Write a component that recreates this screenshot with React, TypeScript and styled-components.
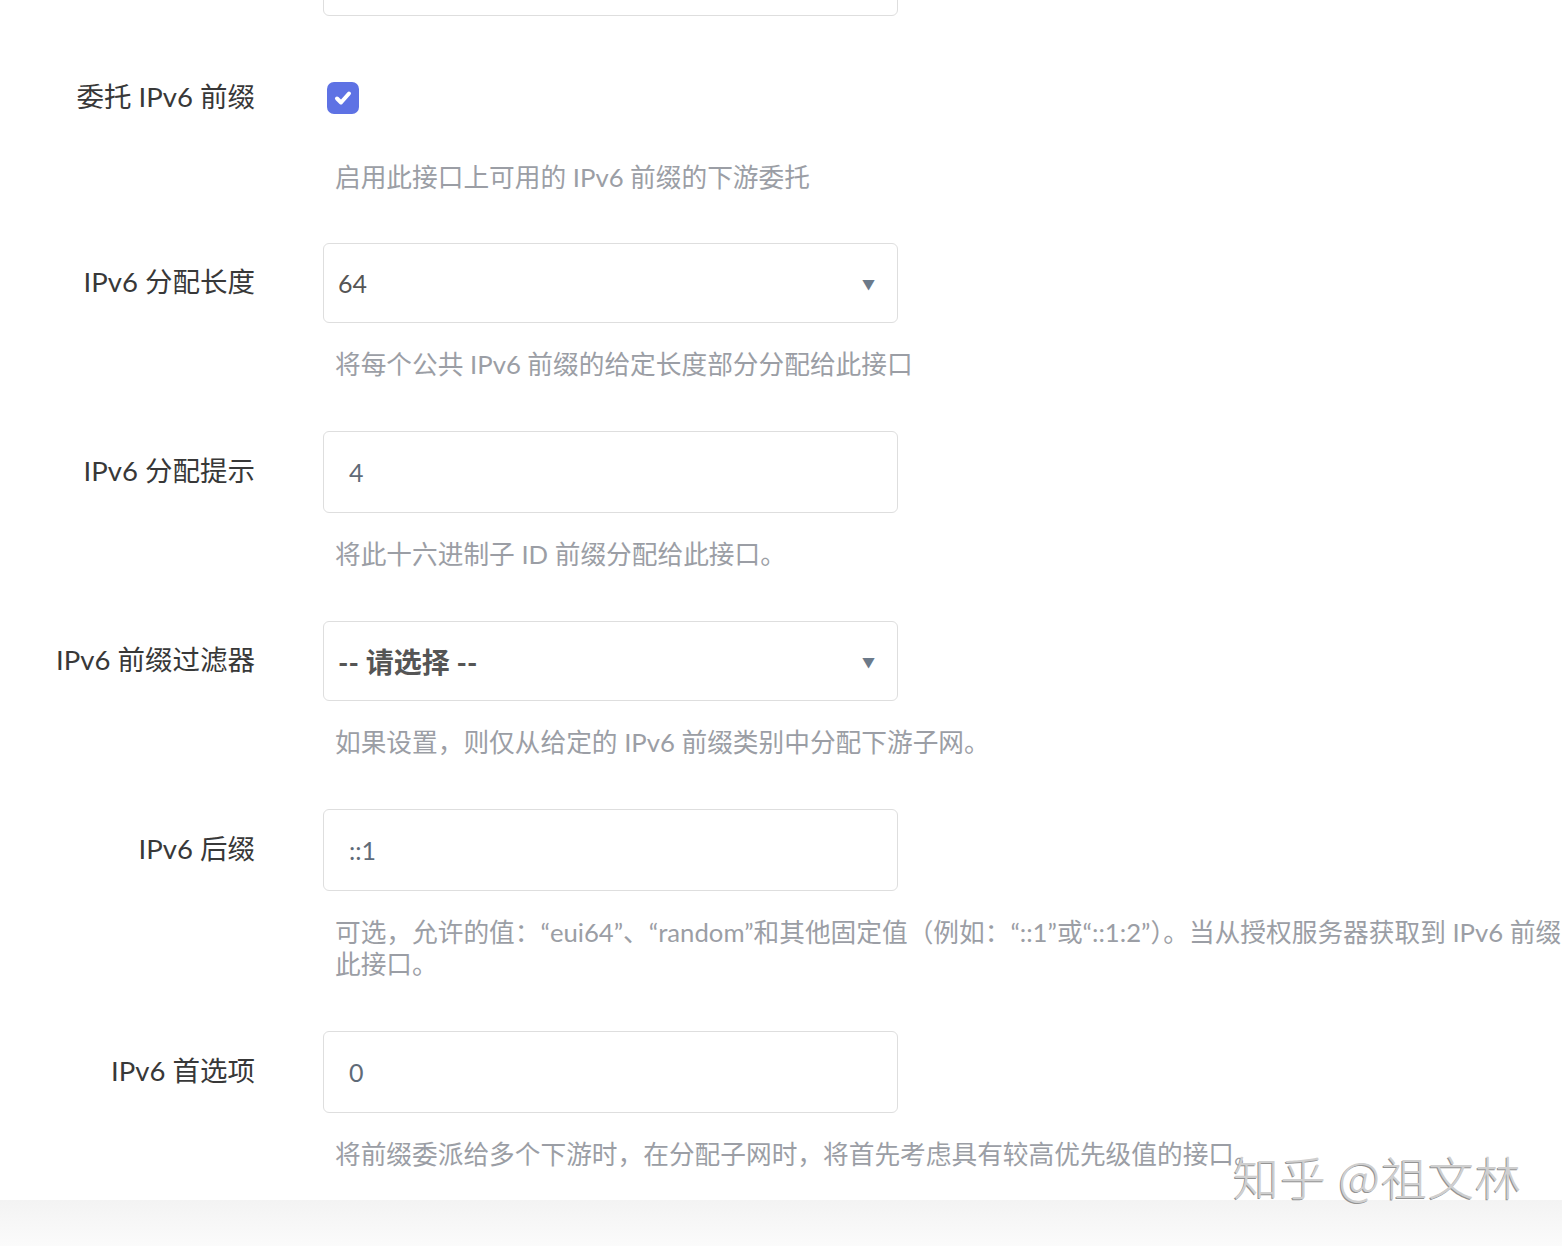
import styled, { createGlobalStyle } from "styled-components"

const GlobalStyle = createGlobalStyle`
  html, body {
    margin: 0;
    padding: 0;
    background: #fff;
    overflow: hidden;
  }
  body {
    font-family: "Lato", "Noto Sans CJK SC", sans-serif;
  }
`

type Field = {
  label: string
  kind: 'input' | 'select' | 'checkbox'
  value?: string
  placeholder?: boolean
  help: string[]
}

const fields: Field[] = [
  { label: '委托 IPv6 前缀', kind: 'checkbox', help: ['启用此接口上可用的 IPv6 前缀的下游委托'] },
  { label: 'IPv6 分配长度', kind: 'select', value: '64', help: ['将每个公共 IPv6 前缀的给定长度部分分配给此接口'] },
  { label: 'IPv6 分配提示', kind: 'input', value: '4', help: ['将此十六进制子 ID 前缀分配给此接口。'] },
  { label: 'IPv6 前缀过滤器', kind: 'select', value: '-- 请选择 --', placeholder: true, help: ['如果设置，则仅从给定的 IPv6 前缀类别中分配下游子网。'] },
  {
    label: 'IPv6 后缀',
    kind: 'input',
    value: '::1',
    help: [
      '可选，允许的值：“eui64”、“random”和其他固定值（例如：“::1”或“::1:2”）。当从授权服务器获取到 IPv6 前缀（如“a:b:c:d::”）时，使用后缀形成 IPv6 地址用于',
      '此接口。',
    ],
  },
  { label: 'IPv6 首选项', kind: 'input', value: '0', help: ['将前缀委派给多个下游时，在分配子网时，将首先考虑具有较高优先级值的接口。'] },
]

export default function App() {
  return (<>
    <GlobalStyle />
    <Page>
      <Form>
        <Row $gap="42px">
          <span />
          <Field>
            <TextBox />
          </Field>
        </Row>

        {fields.map((f, i) => {
          const last = i === fields.length - 1
          const gap = last ? '0' : f.kind === 'checkbox' ? '50px' : '51px'
          return (
            <Row key={f.label} $gap={gap}>
              <Label $h={f.kind === 'input' ? 82 : 80}>{f.label}</Label>
              <Field>
                {f.kind === 'checkbox' && (
                  <CheckWrap>
                    <Check>
                      <svg width="22" height="22" viewBox="0 0 22 22">
                        <path d="M5 11.5 L9 15.5 L17 6.5" fill="none" stroke="#fff" strokeWidth="4" strokeLinecap="round" strokeLinejoin="round" />
                      </svg>
                    </Check>
                  </CheckWrap>
                )}
                {f.kind === 'select' && (
                  <SelectBox $placeholder={!!f.placeholder}>
                    <span>{f.value}</span>
                    <Caret>▼</Caret>
                  </SelectBox>
                )}
                {f.kind === 'input' && <TextBox>{f.value}</TextBox>}
                <Help $top={f.kind === 'checkbox' ? 23 : 25}>
                  {f.help.map((line, j) => (
                    <div key={j}>{line}</div>
                  ))}
                </Help>
              </Field>
            </Row>
          )
        })}
      </Form>
      <Footer />
      <Watermark>知乎 @祖文林</Watermark>
    </Page>
  </>)
}

const Page = styled.div`
  position: relative;
  width: 1562px;
  height: 1246px;
  overflow: hidden;
  display: flex;
  flex-direction: column;
`

const Form = styled.div`
  margin-top: -66px;
  flex: 1;
`

const Row = styled.div<{ $gap: string }>`
  display: grid;
  grid-template-columns: 255px 1fr;
  column-gap: 68px;
  margin-bottom: ${p => p.$gap};
`

const Label = styled.div<{ $h: number }>`
  height: ${p => p.$h}px;
  display: flex;
  align-items: center;
  justify-content: flex-end;
  font-size: 27.5px;
  color: #383838;
  white-space: nowrap;
  padding-bottom: 6px;
  box-sizing: border-box;
`

const Field = styled.div`
  display: flex;
  flex-direction: column;
  min-width: 0;
`

const Box = styled.div`
  box-sizing: border-box;
  width: 575px;
  border: 1.5px solid #dedede;
  border-radius: 6px;
  background: #fff;
  display: flex;
  align-items: center;
`

const TextBox = styled(Box)`
  height: 82px;
  padding-left: 25px;
  font-size: 25px;
  color: #5f6b78;
`

const SelectBox = styled(Box)<{ $placeholder: boolean }>`
  height: 80px;
  padding: 0 22px 0 14px;
  justify-content: space-between;
  font-size: ${p => p.$placeholder ? '28px' : '25px'};
  color: #555;
  font-weight: ${p => p.$placeholder ? 700 : 400};
`

const Caret = styled.span`
  font-size: 13px;
  color: #6c7a8a;
  font-weight: 400;
`

const CheckWrap = styled.div`
  height: 80px;
  display: flex;
  align-items: center;
  padding-left: 4px;
`

const Check = styled.div`
  width: 32px;
  height: 32px;
  border-radius: 7px;
  background: #5e72e4;
  display: flex;
  align-items: center;
  justify-content: center;
`

const Help = styled.div<{ $top: number }>`
  margin-top: ${p => p.$top}px;
  padding-left: 12px;
  font-size: 25.7px;
  line-height: 32px;
  color: #9b9ea5;
  white-space: nowrap;
`

const Footer = styled.div`
  height: 46px;
  background: linear-gradient(#f3f3f3, #fbfbfb);
`

const Watermark = styled.div`
  position: absolute;
  right: 40px;
  bottom: 38px;
  font-size: 46px;
  color: #cfcfcf;
  text-shadow: -1px 1px 0 #939393;
  letter-spacing: 1px;
  font-family: "Noto Sans CJK SC", sans-serif;
  font-weight: 300;
`
